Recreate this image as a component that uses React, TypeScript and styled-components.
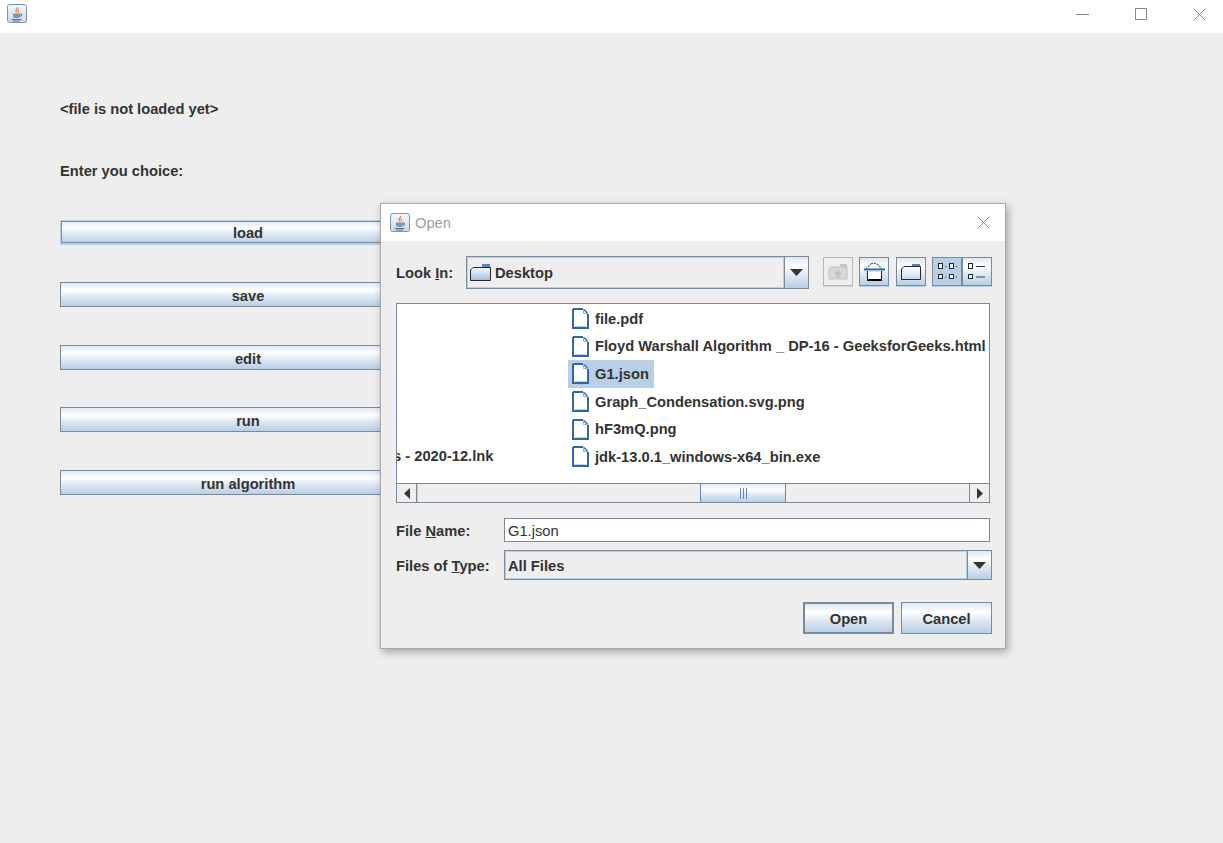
import React from "react";
import styled, { createGlobalStyle, css } from "styled-components";

const GlobalStyle = createGlobalStyle`
	html, body {
		margin: 0;
		padding: 0;
		width: 100%;
		height: 100%;
		overflow: hidden;
		background: #eeeeee;
		font-family: "Liberation Sans", Arial, sans-serif;
		color: #333333;
	}
	* {
		box-sizing: border-box;
	}
`;

const oceanGradient = css`
	background: linear-gradient(
		180deg,
		#dde8f3 0%,
		#ffffff 30%,
		#dde8f3 60%,
		#b8cfe5 100%
	);
`;

const Frame = styled.div`
	position: relative;
	width: 1223px;
	height: 843px;
	display: flex;
	flex-direction: column;
	background: #eeeeee;
	overflow: hidden;
`;

const TitleBar = styled.header`
	height: 33px;
	flex: none;
	background: #ffffff;
	display: flex;
	align-items: flex-start;
	justify-content: space-between;
	padding: 4px 0 0 7px;
`;

const WindowControls = styled.div`
	display: flex;
	margin: -4px -6px 0 0;
`;

const WindowControl = styled.span`
	width: 58.5px;
	height: 28px;
	display: flex;
	align-items: center;
	justify-content: center;
`;

const MainPanel = styled.main`
	flex: 1;
	display: flex;
	flex-direction: column;
	gap: 37.5px;
	padding: 61.5px 0 0 60px;
	width: 436px;
`;

const ChoiceLabel = styled.div`
	height: 25px;
	font-size: 14.7px;
	font-weight: 700;
	line-height: 29px;
	white-space: nowrap;
`;

const ChoiceButton = styled.button<{ $focused?: boolean }>`
	height: 25px;
	width: 376px;
	flex: none;
	padding: 3px 0 0;
	border: 1px solid #7a8a99;
	font: 700 14.7px "Liberation Sans", Arial, sans-serif;
	color: #333333;
	${oceanGradient}
	${(p) =>
		p.$focused &&
		css`
			border-color: #b8cfe5;
			border-bottom-width: 2px;
			box-shadow: inset 0 0 0 1px #7a8a99;
		`}
`;

const Dialog = styled.section`
	position: absolute;
	left: 380px;
	top: 203px;
	width: 626px;
	height: 446px;
	background: #eeeeee;
	border: 1px solid #a8a8a8;
	box-shadow: 2px 3px 8px rgba(0, 0, 0, 0.32);
	display: flex;
	flex-direction: column;
`;

const DialogTitleBar = styled.div`
	height: 37px;
	flex: none;
	background: #ffffff;
	display: flex;
	align-items: center;
	padding: 0 15px 0 9px;
	gap: 5px;
`;

const DialogTitle = styled.span`
	flex: 1;
	font-size: 14.7px;
	color: #a0a0a0;
`;

const DialogBody = styled.div`
	flex: 1;
	display: flex;
	flex-direction: column;
	padding: 15px 13px 0 15px;
`;

const LookInRow = styled.div`
	display: flex;
	align-items: flex-start;
	height: 33px;
`;

const FieldLabel = styled.label<{ $width: number }>`
	width: ${(p) => p.$width}px;
	flex: none;
	font-size: 14.7px;
	font-weight: 700;
	white-space: nowrap;
	align-self: center;
`;

const Combo = styled.div<{ $width: number; $height: number }>`
	width: ${(p) => p.$width}px;
	height: ${(p) => p.$height}px;
	flex: none;
	display: flex;
	border: 1px solid #7a8a99;
	background: #eeeeee;
`;

const ComboValue = styled.div`
	flex: 1;
	display: flex;
	align-items: center;
	gap: 4px;
	padding-left: 2px;
	border: 1px solid #b8cfe5;
	font-size: 14.7px;
	font-weight: 700;
`;

const ComboArrow = styled.div`
	width: 24px;
	flex: none;
	display: flex;
	align-items: center;
	justify-content: center;
	border-left: 1px solid #7a8a99;
	${oceanGradient}
`;

const Toolbar = styled.div`
	display: flex;
	margin: 1px 0 0 14px;
`;

const ToolButton = styled.div<{ $disabled?: boolean; $active?: boolean; $gap?: number }>`
	width: 30px;
	height: 29px;
	display: flex;
	align-items: center;
	justify-content: center;
	margin-left: ${(p) => p.$gap ?? 0}px;
	border: 1px solid ${(p) => (p.$disabled ? "#b8b8b8" : "#7a8a99")};
	box-shadow: 0 1px 0 ${(p) => (p.$disabled ? "#d4d4d4" : "#b8cfe5")};
	${(p) =>
		p.$disabled
			? css`
					background: #eeeeee;
				`
			: p.$active
				? css`
						background: #b8cfe5;
					`
				: oceanGradient}
`;

const FileList = styled.div`
	margin-top: 14px;
	margin-right: 2px;
	width: 594px;
	height: 200px;
	flex: none;
	display: flex;
	flex-direction: column;
	border: 1px solid #7a8a99;
	background: #ffffff;
`;

const FileColumns = styled.div`
	flex: 1;
	display: grid;
	grid-template-columns: 171px 1fr;
	padding-top: 1px;
	overflow: hidden;
`;

const FileColumn = styled.div`
	display: flex;
	flex-direction: column;
	overflow: hidden;
`;

const FileRow = styled.div<{ $selected?: boolean; $clipped?: boolean }>`
	height: 27.6px;
	flex: none;
	display: flex;
	align-items: center;
	gap: 6px;
	width: fit-content;
	padding: 0 5px 0 4px;
	font-size: 14.7px;
	font-weight: 700;
	white-space: nowrap;
	background: ${(p) => (p.$selected ? "#b8cfe5" : "transparent")};
	${(p) =>
		p.$clipped &&
		css`
			padding: 0;
			margin-top: auto;
			margin-bottom: 13px;
			margin-left: -4px;
		`}
`;

const ScrollBar = styled.div`
	height: 19px;
	flex: none;
	display: flex;
	background: #eeeeee;
	border-top: 1px solid #7a8a99;
`;

const ScrollArrow = styled.div<{ $side: "left" | "right" }>`
	width: 20px;
	flex: none;
	display: flex;
	align-items: center;
	justify-content: center;
	background: #eeeeee;
	border-${(p) => (p.$side === "left" ? "right" : "left")}: 1px solid #7a8a99;
`;

const ScrollTrack = styled.div`
	flex: 1;
	padding-left: 282px;
	border-left: 1px solid #b8cfe5;
`;

const ScrollThumb = styled.div`
	width: 86px;
	height: 100%;
	display: flex;
	align-items: center;
	justify-content: center;
	border-left: 1px solid #6382bf;
	border-right: 1px solid #6382bf;
	${oceanGradient}
`;

const FormRow = styled.div<{ $top: number }>`
	display: flex;
	align-items: center;
	margin-top: ${(p) => p.$top}px;
	${FieldLabel} {
		padding-top: 2px;
	}
	${ComboValue} {
		padding-top: 2px;
	}
`;

const NameField = styled.div`
	width: 486px;
	height: 24px;
	flex: none;
	display: flex;
	align-items: center;
	padding: 2px 0 0 3px;
	background: #ffffff;
	border: 1px solid #7a8a99;
	font-size: 14.7px;
`;

const ButtonRow = styled.div`
	display: flex;
	justify-content: flex-end;
	gap: 7px;
	margin-top: 22px;
`;

const DialogButton = styled.button<{ $default?: boolean }>`
	width: 91px;
	height: 32px;
	padding: 2px 0 0;
	font: 700 14.7px "Liberation Sans", Arial, sans-serif;
	color: #333333;
	border: ${(p) => (p.$default ? 2 : 1)}px solid #7a8a99;
	${oceanGradient}
`;

function JavaIcon() {
	return (
		<svg width="20" height="19" viewBox="0 0 20 19">
			<defs>
				<linearGradient id="javaBg" x1="0" y1="0" x2="0" y2="1">
					<stop offset="0" stopColor="#f4f7fa" />
					<stop offset="1" stopColor="#c9d8e6" />
				</linearGradient>
			</defs>
			<rect x="0.5" y="0.5" width="19" height="18" rx="2" fill="url(#javaBg)" stroke="#7f93a6" />
			<path d="M10.5 3 C12 5 8 6 9.5 8.5 C8 6.5 9 5.5 10 4.5 Z M12 5.5 C11 6.5 11 7.5 11.5 8.5 C10.8 7.5 10.7 6.3 12 5.5 Z" fill="#e8762b" stroke="#e8762b" strokeWidth="0.6" />
			<path d="M6 9.5 H13 V12 C13 13.5 12 14 11 14 H8 C7 14 6 13.5 6 12 Z" fill="#8295a8" />
			<path d="M13 10 H14.5 V12 H13" fill="none" stroke="#6c8094" />
			<path d="M4.5 15.5 H14.5 M6 17 H13" stroke="#5f7690" />
		</svg>
	);
}

function FileIcon() {
	return (
		<svg width="17" height="21" viewBox="0 0 17 21" style={{ flex: "none" }}>
			<path d="M1 1 H11 L16 6 V20 H1 Z" fill="#ffffff" />
			<path d="M1 1 H11 M1 1 V20 H16 V6" fill="none" stroke="#2f68a8" strokeWidth="2" />
			<path d="M11.5 1 V5.5 H16" fill="#dde8f3" stroke="#8fb0d0" />
			<path d="M12 1.5 L15.5 5" stroke="#2f68a8" strokeWidth="1.2" />
			<path d="M3 18.5 H14" stroke="#b8cfe5" />
		</svg>
	);
}

function FolderIcon() {
	return (
		<svg width="21" height="17" viewBox="0 0 21 17" style={{ flex: "none" }}>
			<defs>
				<linearGradient id="folderFill" x1="0" y1="0" x2="0" y2="1">
					<stop offset="0" stopColor="#f6f9fc" />
					<stop offset="1" stopColor="#9fbcd9" />
				</linearGradient>
			</defs>
			<rect x="12" y="0" width="8" height="3" fill="#5f83c2" />
			<path d="M0.5 6 L3 3.5 H20.5 V16.5 H0.5 Z" fill="url(#folderFill)" stroke="#26272b" />
		</svg>
	);
}

function ArrowDown() {
	return (
		<svg width="13" height="7" viewBox="0 0 13 7">
			<path d="M0 0 H13 L6.5 7 Z" fill="#333333" />
		</svg>
	);
}

function ScrollGlyph({ side }: { side: "left" | "right" }) {
	return (
		<svg width="6" height="11" viewBox="0 0 6 11">
			<path d={side === "left" ? "M6 0 V11 L0 5.5 Z" : "M0 0 V11 L6 5.5 Z"} fill="#333333" />
		</svg>
	);
}

function ThumbGrip() {
	return (
		<svg width="8" height="11" viewBox="0 0 8 11">
			<path d="M1.5 0 V11 M4.5 0 V11 M7.5 0 V11" stroke="#6382bf" strokeWidth="1" />
		</svg>
	);
}

function UpFolderIcon() {
	return (
		<svg width="20" height="17" viewBox="0 0 20 17">
			<rect x="12" y="1" width="7" height="3" fill="#c4c4c4" />
			<path d="M1 6 L3 4 H19 V16 H1 Z" fill="#d8d8d8" stroke="#c2c2c2" />
			<path d="M10 7 L14 11 H11.5 V15 H8.5 V11 H6 Z" fill="#c0c0c0" />
		</svg>
	);
}

function HomeIcon() {
	return (
		<svg width="22" height="19" viewBox="0 0 22 19">
			<path d="M1 7.5 H22" stroke="#2f68a8" strokeWidth="2" />
			<path d="M3 7 L8 2 M14 2 L19 7 M8 1.5 H14" stroke="#2f68a8" strokeDasharray="2 1" strokeWidth="1.2" fill="none" />
			<rect x="4" y="9" width="15" height="9" fill="#ffffff" stroke="#b8cfe5" />
			<path d="M4.5 9 V18 M18.5 9 V18" stroke="#26272b" />
			<path d="M4 18 H19" stroke="#000000" strokeWidth="2" />
		</svg>
	);
}

function NewFolderIcon() {
	return (
		<svg width="20" height="17" viewBox="0 0 20 17">
			<defs>
				<linearGradient id="newFolderFill" x1="0" y1="0" x2="0" y2="1">
					<stop offset="0" stopColor="#ffffff" />
					<stop offset="1" stopColor="#c9dbec" />
				</linearGradient>
			</defs>
			<rect x="11" y="1" width="8" height="3" fill="#5f83c2" />
			<path d="M0.5 6 L3 3.5 H19.5 V16.5 H0.5 Z" fill="url(#newFolderFill)" stroke="#26272b" />
		</svg>
	);
}

function ListIcon() {
	return (
		<svg width="20" height="17" viewBox="0 0 20 17">
			<g fill="#ffffff" stroke="#26272b">
				<rect x="1.5" y="0.5" width="4" height="5" />
				<rect x="1.5" y="11.5" width="4" height="4" />
				<rect x="12.5" y="0.5" width="4" height="5" />
				<rect x="12.5" y="11.5" width="4" height="4" />
			</g>
			<path d="M8.5 3.5 H9.5 M19 3.5 H20 M8.5 14 H9.5 M19 14 H20" stroke="#26272b" />
		</svg>
	);
}

function DetailsIcon() {
	return (
		<svg width="20" height="17" viewBox="0 0 20 17">
			<g fill="#ffffff" stroke="#26272b">
				<rect x="1.5" y="0.5" width="4" height="5" />
				<rect x="1.5" y="11.5" width="4" height="4" />
			</g>
			<path d="M9 3.5 H18 M9 14 H18" stroke="#3a3a3a" />
		</svg>
	);
}

const leftColumnFile = "s - 2020-12.lnk";
const files = [
	"file.pdf",
	"Floyd Warshall Algorithm _ DP-16 - GeeksforGeeks.html",
	"G1.json",
	"Graph_Condensation.svg.png",
	"hF3mQ.png",
	"jdk-13.0.1_windows-x64_bin.exe",
];
const choices = ["load", "save", "edit", "run", "run algorithm"];

export default function App() {
	return (
		<>
			<GlobalStyle />
			<Frame>
				<TitleBar>
					<JavaIcon />
					<WindowControls>
						<WindowControl>
							<svg width="13" height="1"><path d="M0 .5 H13" stroke="#888888" /></svg>
						</WindowControl>
						<WindowControl>
							<svg width="12" height="12"><rect x=".5" y=".5" width="11" height="11" fill="none" stroke="#8a8a8a" /></svg>
						</WindowControl>
						<WindowControl>
							<svg width="13" height="13"><path d="M.5 .5 L12.5 12.5 M12.5 .5 L.5 12.5" stroke="#8a8a8a" /></svg>
						</WindowControl>
					</WindowControls>
				</TitleBar>
				<MainPanel>
					<ChoiceLabel>&lt;file is not loaded yet&gt;</ChoiceLabel>
					<ChoiceLabel>Enter you choice:</ChoiceLabel>
					{choices.map((choice, i) => (
						<ChoiceButton key={choice} $focused={i === 0}>
							{choice}
						</ChoiceButton>
					))}
				</MainPanel>
				<Dialog>
					<DialogTitleBar>
						<JavaIcon />
						<DialogTitle>Open</DialogTitle>
						<svg width="13" height="13"><path d="M.5 .5 L12.5 12.5 M12.5 .5 L.5 12.5" stroke="#8a8a8a" /></svg>
					</DialogTitleBar>
					<DialogBody>
						<LookInRow>
							<FieldLabel $width={70}>
								Look <u>I</u>n:
							</FieldLabel>
							<Combo $width={343} $height={33}>
								<ComboValue>
									<FolderIcon />
									Desktop
								</ComboValue>
								<ComboArrow>
									<ArrowDown />
								</ComboArrow>
							</Combo>
							<Toolbar>
								<ToolButton $disabled>
									<UpFolderIcon />
								</ToolButton>
								<ToolButton $gap={6}>
									<HomeIcon />
								</ToolButton>
								<ToolButton $gap={7}>
									<NewFolderIcon />
								</ToolButton>
								<ToolButton $gap={6} $active>
									<ListIcon />
								</ToolButton>
								<ToolButton>
									<DetailsIcon />
								</ToolButton>
							</Toolbar>
						</LookInRow>
						<FileList>
							<FileColumns>
								<FileColumn>
									<FileRow $clipped>{leftColumnFile}</FileRow>
								</FileColumn>
								<FileColumn>
									{files.map((file) => (
										<FileRow key={file} $selected={file === "G1.json"}>
											<FileIcon />
											{file}
										</FileRow>
									))}
								</FileColumn>
							</FileColumns>
							<ScrollBar>
								<ScrollArrow $side="left">
									<ScrollGlyph side="left" />
								</ScrollArrow>
								<ScrollTrack>
									<ScrollThumb>
										<ThumbGrip />
									</ScrollThumb>
								</ScrollTrack>
								<ScrollArrow $side="right">
									<ScrollGlyph side="right" />
								</ScrollArrow>
							</ScrollBar>
						</FileList>
						<FormRow $top={15}>
							<FieldLabel $width={108}>
								File <u>N</u>ame:
							</FieldLabel>
							<NameField>G1.json</NameField>
						</FormRow>
						<FormRow $top={8}>
							<FieldLabel $width={108}>
								Files of <u>T</u>ype:
							</FieldLabel>
							<Combo $width={488} $height={30}>
								<ComboValue>All Files</ComboValue>
								<ComboArrow>
									<ArrowDown />
								</ComboArrow>
							</Combo>
						</FormRow>
						<ButtonRow>
							<DialogButton $default>Open</DialogButton>
							<DialogButton>Cancel</DialogButton>
						</ButtonRow>
					</DialogBody>
				</Dialog>
			</Frame>
		</>
	);
}
